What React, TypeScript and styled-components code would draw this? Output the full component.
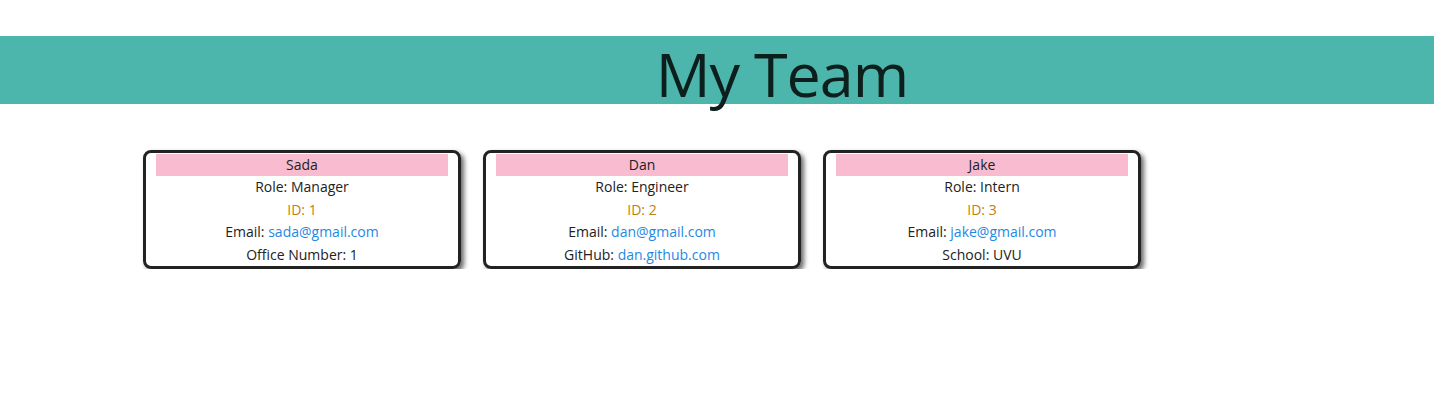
import styled, { createGlobalStyle } from "styled-components";

const GlobalStyle = createGlobalStyle`
  body {
    margin: 0;
    font-family: "Open Sans", "Noto Sans", sans-serif;
    background: #fff;
  }
`;

type Member = {
  name: string;
  role: string;
  id: number;
  email: string;
  extraLabel: string;
  extraValue: string;
  extraLink?: boolean;
};

const team: Member[] = [
  { name: "Sada", role: "Manager", id: 1, email: "sada@gmail.com", extraLabel: "Office Number", extraValue: "1" },
  { name: "Dan", role: "Engineer", id: 2, email: "dan@gmail.com", extraLabel: "GitHub", extraValue: "dan.github.com", extraLink: true },
  { name: "Jake", role: "Intern", id: 3, email: "jake@gmail.com", extraLabel: "School", extraValue: "UVU" },
];

const App = () => {
  return (
    <Page>
      <GlobalStyle />
      <Header>
        <Title>My Team</Title>
      </Header>
      <Cards>
        {team.map((m) => (
          <Card key={m.id}>
            <Name>{m.name}</Name>
            <Row>Role: {m.role}</Row>
            <Row $tone="id">ID: {m.id}</Row>
            <Row>
              Email: <Link>{m.email}</Link>
            </Row>
            <Row>
              {m.extraLabel}: {m.extraLink ? <Link>{m.extraValue}</Link> : m.extraValue}
            </Row>
          </Card>
        ))}
      </Cards>
    </Page>
  );
};
export default App;

const Page = styled.div`
  padding-top: 36px;
`;

const Header = styled.div`
  height: 68px;
  background-color: #4db6ac;
  display: flex;
  justify-content: center;
  padding-left: 130px;
`;

const Title = styled.h1`
  margin: 0;
  font-weight: 400;
  font-size: 61px;
  line-height: 76px;
  color: #0d1f1c;
  letter-spacing: -1px;
`;

const Cards = styled.div`
  display: flex;
  gap: 22px;
  padding: 46px 0 0 143px;
`;

const Card = styled.div`
  width: 292px;
  padding: 1px 10px 0;
  border: 3px solid #222;
  border-radius: 8px;
  box-shadow: 3px 3px 5px rgba(0, 0, 0, 0.6);
  display: flex;
  flex-direction: column;
  align-items: stretch;
  text-align: center;
  font-size: 14px;
  color: #222;
`;

const Name = styled.div`
  background-color: #f8bbd0;
  height: 22px;
  line-height: 22px;
`;

const Row = styled.div<{ $tone?: "id" }>`
  line-height: 22.5px;
  color: ${(p) => (p.$tone === "id" ? "#c17d11" : "#222")};
`;

const Link = styled.span`
  color: #1e88e5;
`;
